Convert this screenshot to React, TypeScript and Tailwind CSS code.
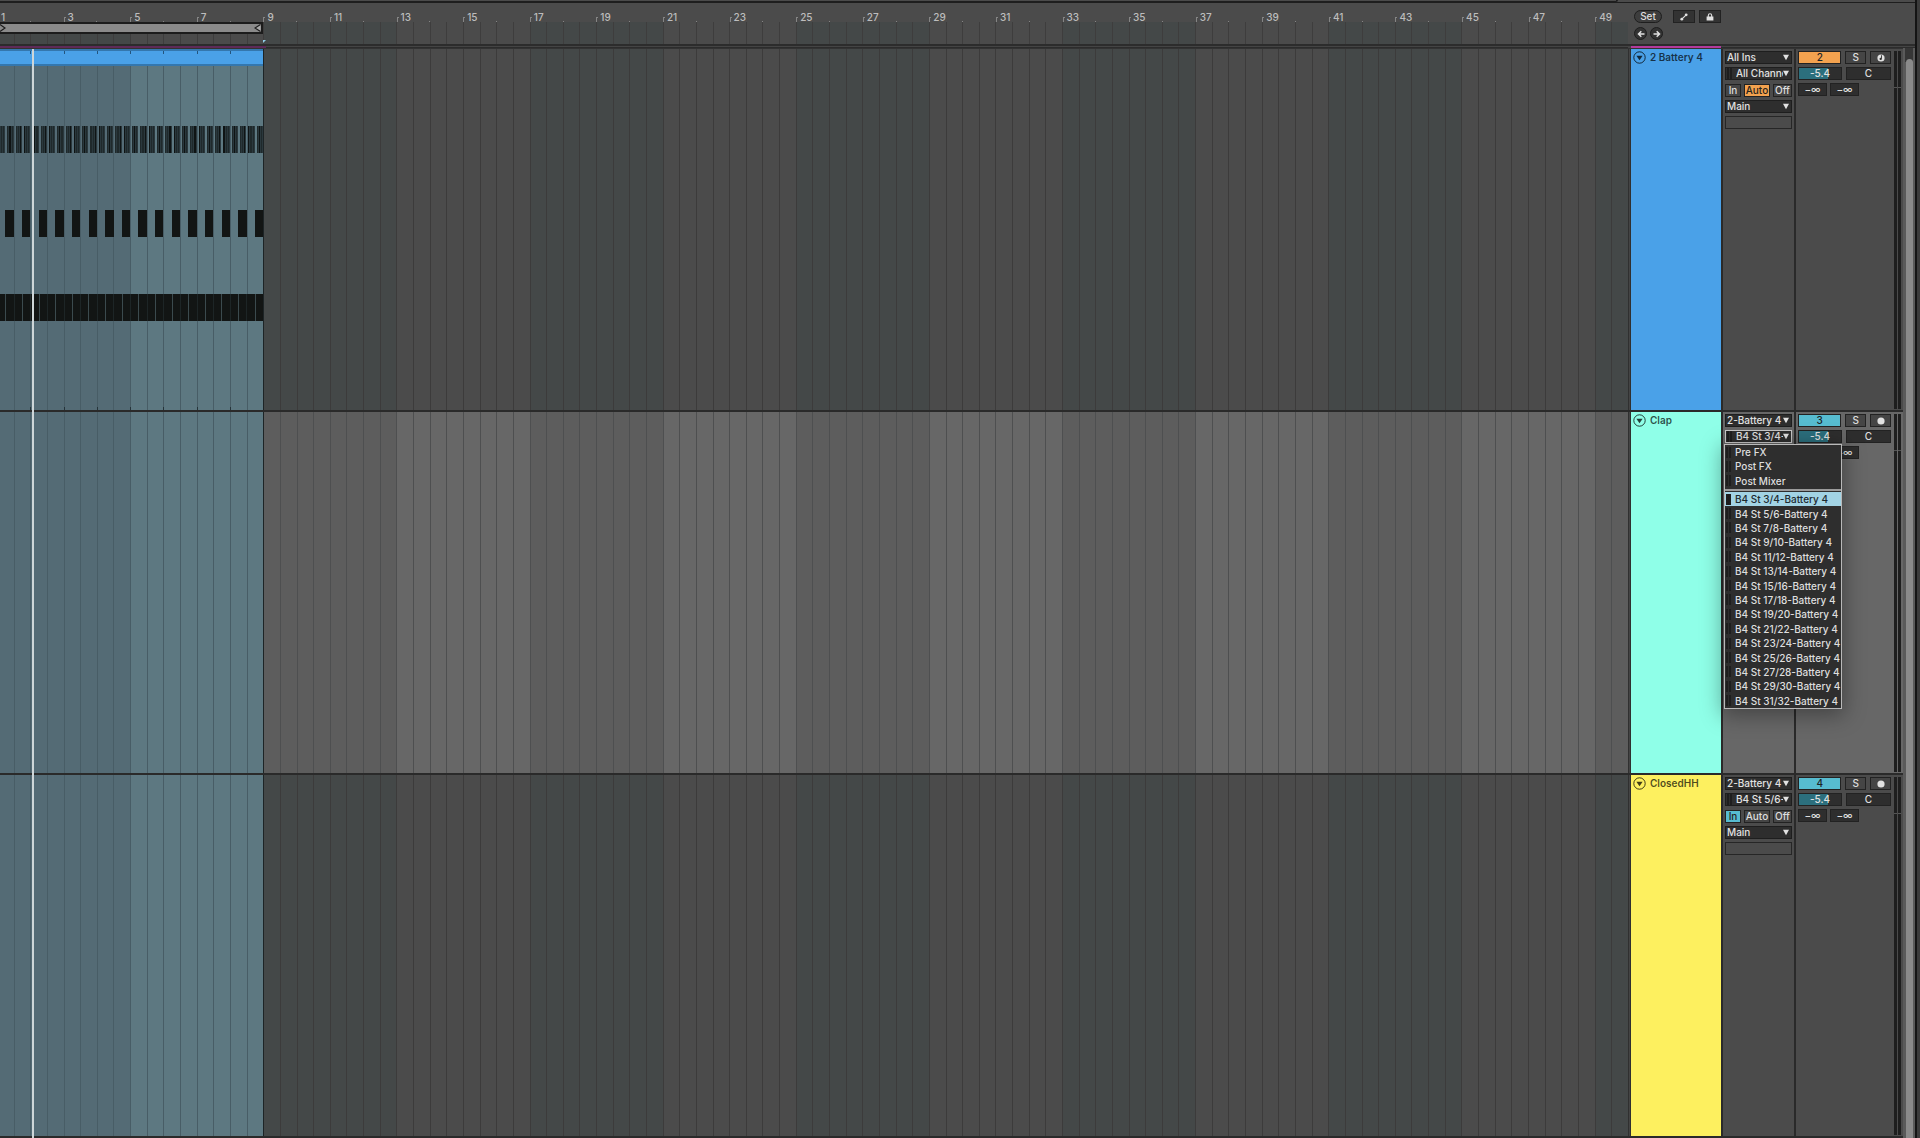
import React from "react";

type Routing = { id: string; input: string; channel: string; output: string };
type Track = Routing & {
  name: string;
  color: string;
  number: string;
  numberColor: string;
  monitor: "In" | "Auto" | "Off";
  monitorColor: string;
  selected?: boolean;
  midi?: boolean;
  menuOpen?: boolean;
};

const tracks: Track[] = [
  {
    id: "battery", name: "2 Battery 4", color: "bg-[#4aa1e8]", number: "2", numberColor: "bg-[#f3a24f]",
    monitor: "Auto", monitorColor: "bg-[#f3a24f]", input: "All Ins", channel: "All Channels", output: "Main", midi: true,
  },
  {
    id: "clap", name: "Clap", color: "bg-[#8fffe8]", number: "3", numberColor: "bg-[#57bcd0]",
    monitor: "In", monitorColor: "bg-[#57bcd0]", input: "2-Battery 4", channel: "B4 St 3/4-Battery 4", output: "Main",
    selected: true, menuOpen: true,
  },
  {
    id: "closedhh", name: "ClosedHH", color: "bg-[#fdf05f]", number: "4", numberColor: "bg-[#57bcd0]",
    monitor: "In", monitorColor: "bg-[#57bcd0]", input: "2-Battery 4", channel: "B4 St 5/6-Battery 4", output: "Main",
  },
];

const bars = Array.from({ length: 49 }, (_, i) => i + 1);
const clipBars = bars.slice(0, 8);
const channels = Array.from({ length: 15 }, (_, i) => `B4 St ${i * 2 + 3}/${i * 2 + 4}-Battery 4`);
const taps = ["Pre FX", "Post FX", "Post Mixer"];

const isLight = (bar: number) => Math.floor((bar - 1) / 4) % 2 === 1;

function GridBars({ list, light, dark, line }: { list: number[]; light: string; dark: string; line: string }) {
  return (
    <div className="col-start-1 row-start-1 flex">
      {list.map((bar) => (
        <div key={bar} className={`flex flex-1 ${isLight(bar) ? light : dark}`}>
          <div className={`flex-1 border-l ${line}`} />
          <div className={`flex-1 border-l ${line}`} />
        </div>
      ))}
    </div>
  );
}

function BarTicks({ className }: { className: string }) {
  return (
    <div className="flex h-[3px]">
      {clipBars.map((bar) => (
        <div key={bar} className={`flex-1 border-l ${className}`} />
      ))}
    </div>
  );
}

function HatNotes() {
  return (
    <div className="flex h-[27px]">
      {Array.from({ length: 32 }, (_, i) => (
        <div key={i} className="flex flex-1 pl-[2px]">
          {[0, 1, 2].map((n) => (
            <div
              key={n}
              className={`flex-1 border-r border-[#2a383d] ${(i * 2 + n) % 3 === 0 ? "bg-[#0f1414]" : "bg-[#1f292b]"}`}
            />
          ))}
        </div>
      ))}
    </div>
  );
}

function MidiClip() {
  return (
    <div className="col-start-1 row-start-1 flex flex-col">
      <div className="h-[17px] border-y-2 border-[#3477ae] bg-[#4aa1e8]">
        <BarTicks className="border-[#23557e]" />
      </div>
      <div className="mt-[60px]">
        <HatNotes />
      </div>
      <div className="mt-[57px] flex h-[27px]">
        {Array.from({ length: 16 }, (_, i) => (
          <div key={i} className="flex flex-1">
            <div className="flex-1" />
            <div className="flex-1 bg-[#121514]" />
          </div>
        ))}
      </div>
      <div className="mt-[57px] flex h-[27px]">
        {Array.from({ length: 32 }, (_, i) => (
          <div key={i} className={`flex-1 border-l bg-[#121514] ${i % 2 ? "border-[#3b4a4e]" : "border-[#1d2526]"}`} />
        ))}
      </div>
      <div className="mt-auto">
        <BarTicks className="border-[#26343a]" />
      </div>
    </div>
  );
}

function Lane({ track }: { track: Track }) {
  return (
    <div className="min-w-0 flex-1 overflow-hidden">
      <div className="-ml-[3px] grid h-full grid-cols-[minmax(0,1fr)]">
        {track.selected ? (
          <GridBars list={bars} light="bg-[#676767]" dark="bg-[#5d5d5d]" line="border-[#4e4f50]" />
        ) : (
          <GridBars list={bars} light="bg-[#4b4b4b]" dark="bg-[#444848]" line="border-[#3c3b3b]" />
        )}
        <div className="z-10 col-start-1 row-start-1 flex">
          <div className="grid flex-[8_8_0%] border-r border-[#1d2426]">
            <GridBars list={clipBars} light="bg-[#5d7881]" dark="bg-[#546b75]" line="border-[#485d66]" />
            {track.midi && <MidiClip />}
          </div>
          <div className="flex-[41_41_0%]" />
        </div>
      </div>
    </div>
  );
}

function Slots({ active }: { active?: boolean }) {
  return (
    <span aria-hidden="true" className={`flex h-[11px] w-[5px] shrink-0 gap-px ${active ? "bg-[#1c1c1c]" : ""}`}>
      <span className="w-[2px] bg-[#1e1e1e]" />
      <span className="w-[2px] bg-[#1e1e1e]" />
    </span>
  );
}

function Chooser({ id, label, value, slots, focused }: { id: string; label: string; value: string; slots?: boolean; focused?: boolean }) {
  return (
    <div className={`relative flex h-[13px] w-full items-center border bg-[#2e2e2e] ${focused ? "border-[#c8c8c8]" : "border-[#1e1e1e]"}`}>
      {slots && <span className="ml-px flex"><Slots /></span>}
      <select
        id={id}
        aria-label={label}
        defaultValue={value}
        className={`h-[11px] min-w-0 flex-1 cursor-default appearance-none overflow-hidden bg-transparent text-[10px] leading-[11px] font-medium whitespace-nowrap text-[#e2e2e2] outline-none ${slots ? "mr-[8px] pl-[4px]" : "pl-px"}`}
      >
        <option>{value}</option>
      </select>
      <svg aria-hidden="true" viewBox="0 0 8 7" className="pointer-events-none absolute right-px h-[7px] w-[8px]">
        <path d="M1 0.8h6L4 6.2z" fill="#e2e2e2" />
      </svg>
    </div>
  );
}

const cell = "flex h-[13px] items-center justify-center border border-[#222] text-[10px] leading-[11px] font-medium";

function ChannelMenu({ value }: { value: string }) {
  return (
    <div
      role="listbox"
      aria-label="Input channel"
      className="absolute top-[32px] left-px z-30 flex w-[118px] flex-col border border-[#b9b9b9] bg-[#2e2e2e] text-[10px] leading-[12px] font-medium text-[#dedede] shadow-[0_4px_20px_2px_rgba(0,0,0,0.35)]"
    >
      <div className="grid h-[43px] auto-rows-fr">
        {taps.map((tap) => (
          <button key={tap} type="button" role="option" aria-selected={false} className="flex items-center gap-[4px] pl-px text-left whitespace-nowrap">
            <Slots />
            {tap}
          </button>
        ))}
      </div>
      <div className="mt-px mb-px h-[2px] bg-[#9b9b9b]" />
      <div className="grid h-[216px] auto-rows-fr">
        {channels.map((channel) => (
          <button
            key={channel}
            type="button"
            role="option"
            aria-selected={channel === value}
            className={`flex items-center gap-[4px] pl-px text-left whitespace-nowrap ${channel === value ? "bg-[#a2d3e4] text-[#1d2a2f]" : ""}`}
          >
            <Slots active={channel === value} />
            {channel}
          </button>
        ))}
      </div>
    </div>
  );
}

function RoutingPanel({ track }: { track: Track }) {
  const covered = track.menuOpen ? "invisible" : "";
  return (
    <div className="relative w-[71px] shrink-0 px-[2px] pt-[2px]">
      <div className="flex h-[78px] w-[67px] flex-col justify-between">
        <Chooser id={`${track.id}-input`} label="Input" value={track.input} />
        <Chooser id={`${track.id}-channel`} label="Channel" value={track.channel} slots focused={track.menuOpen} />
        <div className={`flex justify-between ${covered}`}>
          {(["In", "Auto", "Off"] as const).map((mode) => (
            <button
              key={mode}
              type="button"
              aria-pressed={mode === track.monitor}
              className={`${cell} ${mode === "In" ? "w-[16px]" : mode === "Auto" ? "w-[26px]" : "w-[19px]"} ${
                mode === track.monitor ? `${track.monitorColor} text-[#26221c]` : "bg-[#454545] text-[#dedede]"
              }`}
            >
              {mode}
            </button>
          ))}
        </div>
        <div className={covered}>
          <Chooser id={`${track.id}-output`} label="Output" value={track.output} />
        </div>
        <div className="h-[13px] border border-[#262626]" />
      </div>
      {track.menuOpen && <ChannelMenu value={track.channel} />}
    </div>
  );
}

function MixerPanel({ track }: { track: Track }) {
  return (
    <div className="w-[97px] shrink-0 pt-[2px] pl-[2px]">
      <div className="flex h-[45px] w-[93px] flex-col justify-between">
        <div className="flex gap-[4px]">
          <button type="button" aria-label={`Track ${track.number} active`} className={`${cell} w-[44px] text-[#1c2426] ${track.numberColor}`}>
            {track.number}
          </button>
          <button type="button" aria-label="Solo" className={`${cell} w-[21px] bg-[#454545] text-[#dedede]`}>S</button>
          <button type="button" aria-label="Arm" className={`${cell} ml-auto w-[21px] bg-[#454545]`}>
            <svg aria-hidden="true" viewBox="0 0 8 8" className="size-[8px]">
              <circle cx="4" cy="4" r="3.6" fill="#e2e2e2" />
              {track.midi && <path d="M4.900 1.200v3.400a1.200 1.200 0 1 1-.9-.9V1.200z" fill="#333" />}
            </svg>
          </button>
        </div>
        <div className="flex gap-[4px]">
          <button type="button" aria-label="Volume" className={`${cell} w-[44px] bg-[linear-gradient(90deg,#2c6f7d_70%,#2e2e2e_70%)] text-[#e2e2e2]`}>
            -5.4
          </button>
          <button type="button" aria-label="Pan" className={`${cell} flex-1 bg-[#2e2e2e] text-[#dedede]`}>C</button>
        </div>
        <div className="flex gap-[3px]">
          <button type="button" aria-label="Send A" className={`${cell} w-[29px] bg-[#2e2e2e] text-[#dedede]`}>−∞</button>
          <button type="button" aria-label="Send B" className={`${cell} w-[29px] bg-[#2e2e2e] text-[#dedede]`}>−∞</button>
        </div>
      </div>
    </div>
  );
}

function Meter() {
  return (
    <div className="flex w-[10px] shrink-0 gap-px pt-[2px] pb-px pl-px">
      {[0, 1].map((n) => (
        <div key={n} className="w-[3px] bg-[#1e1e1e] pt-[36px]">
          <div className="h-px bg-[#555]" />
        </div>
      ))}
    </div>
  );
}

function TrackRow({ track }: { track: Track }) {
  return (
    <div className="flex flex-1 border-b-2 border-[#2a2a2a]">
      <Lane track={track} />
      <div className="w-[3px] shrink-0 border-x border-[#303030] bg-[#444]" />
      <div className={`flex w-[90px] shrink-0 items-start gap-[4px] pt-[2px] pl-[2px] ${track.color}`}>
        <button type="button" aria-label={`Fold ${track.name}`} className="size-[13px]">
          <svg aria-hidden="true" viewBox="0 0 13 13" className="size-[13px] text-black/75">
            <circle cx="6.5" cy="6.5" r="5.7" fill="none" stroke="currentColor" strokeWidth="1" />
            <path d="M3.400 4.700h6.200L6.500 9.200z" fill="currentColor" />
          </svg>
        </button>
        <span className="text-[10px] leading-[13px] font-semibold text-black/70">{track.name}</span>
      </div>
      <div className={`flex shrink-0 ${track.selected ? "bg-[#676767]" : "bg-[#4b4b4b]"}`}>
        <div className="w-[2px] bg-[#2a2a2a]" />
        <RoutingPanel track={track} />
        <div className="w-[2px] bg-[#2a2a2a]" />
        <MixerPanel track={track} />
        <Meter />
      </div>
    </div>
  );
}

function Ruler() {
  return (
    <div className="min-w-0 flex-1 overflow-hidden">
      <div className="-ml-[3px] flex h-[41px] flex-col">
        <div className="flex h-[19px] items-end">
          {bars.map((bar) =>
            bar % 2 ? (
              <div key={bar} className="flex min-w-0 flex-1 items-end">
                <span className="h-[5px] w-[2px] shrink-0 border-t border-l border-[#858585]" />
                <span className="pl-[2px] text-[10px] leading-[10px] font-medium text-[#bdbdbd]">{bar}</span>
              </div>
            ) : (
              <div key={bar} className="h-px min-w-0 flex-1 border-l border-[#858585]" />
            ),
          )}
        </div>
        <div className="grid flex-1 grid-cols-[minmax(0,1fr)]">
          <GridBars list={bars} light="bg-[#4b4b4b]" dark="bg-[#444848]" line="border-[#3e3d3d]" />
          <div className="col-start-1 row-start-1 flex">
            <div className="flex-[8_8_0%]">
              <div className="ml-[2px] flex h-[12px] items-center justify-between border-2 border-l-0 border-[#1c1c1c] bg-[#8a8a8a]">
                <svg aria-hidden="true" viewBox="0 0 7 8" className="h-[8px] w-[7px]">
                  <path d="M1 .5 6 4 1 7.500" fill="#8a8a8a" stroke="#1c1c1c" strokeWidth="1.2" />
                </svg>
                <svg aria-hidden="true" viewBox="0 0 7 8" className="h-[8px] w-[7px]">
                  <path d="M6.500 .5 1 4l5.500 3.500" fill="#aaa" stroke="#1c1c1c" strokeWidth="1.2" />
                </svg>
              </div>
            </div>
            <div className="flex flex-[41_41_0%] items-end pb-px">
              <svg aria-hidden="true" viewBox="0 0 3 3" className="size-[3px]">
                <path d="M0 0h3L0 3z" fill="#8fd0ea" />
              </svg>
            </div>
          </div>
        </div>
      </div>
    </div>
  );
}

function LocatorPanel() {
  const round = "flex size-[13px] items-center justify-center rounded-full border border-[#1e1e1e] bg-[#333]";
  return (
    <div className="flex w-[287px] shrink-0 flex-col items-start gap-[4px] pt-[7px] pl-[6px]">
      <div className="flex items-center">
        <button type="button" className="mr-[11px] h-[13px] w-[28px] rounded-full border border-[#1e1e1e] bg-[#3d3d3d] text-[10px] leading-[11px] font-medium text-[#dedede]">
          Set
        </button>
        <button type="button" aria-label="Automation mode" className={`${cell} mr-[4px] w-[22px] bg-[#333]`}>
          <svg aria-hidden="true" viewBox="0 0 8 8" className="size-[8px]">
            <path d="M1.800 6.200 6.200 1.800" stroke="#e2e2e2" strokeWidth="1.200" />
            <circle cx="1.800" cy="6.200" r="1.400" fill="#e2e2e2" />
            <circle cx="6.200" cy="1.800" r="1.400" fill="#e2e2e2" />
          </svg>
        </button>
        <button type="button" aria-label="Lock envelopes" className={`${cell} w-[22px] bg-[#333]`}>
          <svg aria-hidden="true" viewBox="0 0 8 8" className="size-[8px]">
            <path d="M2.300 4V2.500a1.700 1.700 0 0 1 3.400 0V4" fill="none" stroke="#e2e2e2" strokeWidth="1.100" />
            <rect x="0.600" y="3.500" width="6.800" height="4" fill="#e2e2e2" />
          </svg>
        </button>
      </div>
      <div className="flex gap-[3px]">
        <button type="button" aria-label="Previous locator" className={round}>
          <svg aria-hidden="true" viewBox="0 0 8 8" className="size-[8px]">
            <path d="M7.500 4H2M4.300 1.300 1.500 4l2.800 2.700" fill="none" stroke="#e2e2e2" strokeWidth="1.500" />
          </svg>
        </button>
        <button type="button" aria-label="Next locator" className={round}>
          <svg aria-hidden="true" viewBox="0 0 8 8" className="size-[8px]">
            <path d="M.5 4H6M3.700 1.300 6.500 4 3.700 6.700" fill="none" stroke="#e2e2e2" strokeWidth="1.500" />
          </svg>
        </button>
      </div>
    </div>
  );
}

export default function App() {
  return (
    <div className="flex h-screen w-full bg-[#4b4b4b] font-['Inter','Liberation_Sans',sans-serif] select-none">
      <div className="flex min-w-0 flex-1 flex-col">
        <div className="flex h-[3px] border-b border-[#1e1e1e] bg-[#4b4b4b]">
          <div className="flex-1 rounded-br-[3px] border-r-2 border-b border-[#1e1e1e]" />
          <div className="w-[297px]" />
        </div>
        <div className="flex">
          <Ruler />
          <LocatorPanel />
        </div>
        <div className="h-[2px] bg-[#2c2c2c]" />
        <div className="flex h-[2px] bg-[#444]">
          <div className="flex min-w-0 flex-1">
            <div className="flex-[8_8_0%] bg-[#5e2a58]" />
            <div className="flex-[41_41_0%] border-b border-[#2c2c2c]" />
          </div>
          <div className="ml-[3px] w-[90px] bg-[#b33a9c]" />
          <div className="w-[194px] border-b border-[#2c2c2c]" />
        </div>
        <div className="flex min-h-0 flex-1">
          <main className="relative flex min-w-0 flex-1 flex-col border-t border-[#333]">
            {tracks.map((track) => (
              <TrackRow key={track.id} track={track} />
            ))}
            <div className="absolute inset-y-0 left-[32px] z-20 w-[2px] bg-[#ced6d8]" />
          </main>
          <div className="flex w-[12px] shrink-0 flex-col items-center bg-[#5a5a5a]">
            <div className="h-[14px] w-[8px] shrink-0 bg-[#363636]" />
            <div className="-mt-[3px] w-[7px] flex-1 rounded-t-full bg-[#8a8a8a]" />
          </div>
        </div>
      </div>
      <div className="w-[5px] shrink-0 border-l-2 border-[#141414] bg-[#3b3b3b]" />
    </div>
  );
}
